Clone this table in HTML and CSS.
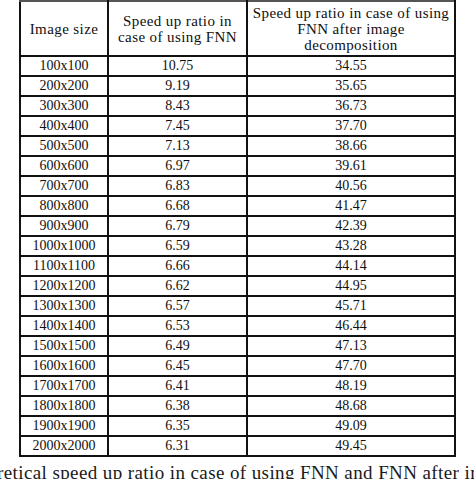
FILE: index.html
```html
<!DOCTYPE html>
<html>
<head>
<meta charset="utf-8">
<link rel="stylesheet" href="styles.css">
</head>
<body>
<table class="tbl">
  <colgroup><col class="c1"><col class="c2"><col class="c3"></colgroup>
  <thead>
    <tr class="head">
      <th>Image size</th>
      <th>Speed up ratio in<br>case of using FNN</th>
      <th>Speed up ratio in case of using<br>FNN after image<br>decomposition</th>
    </tr>
  </thead>
  <tbody>
    <tr><td>100x100</td><td>10.75</td><td>34.55</td></tr>
    <tr><td>200x200</td><td>9.19</td><td>35.65</td></tr>
    <tr><td>300x300</td><td>8.43</td><td>36.73</td></tr>
    <tr><td>400x400</td><td>7.45</td><td>37.70</td></tr>
    <tr><td>500x500</td><td>7.13</td><td>38.66</td></tr>
    <tr><td>600x600</td><td>6.97</td><td>39.61</td></tr>
    <tr><td>700x700</td><td>6.83</td><td>40.56</td></tr>
    <tr><td>800x800</td><td>6.68</td><td>41.47</td></tr>
    <tr><td>900x900</td><td>6.79</td><td>42.39</td></tr>
    <tr><td>1000x1000</td><td>6.59</td><td>43.28</td></tr>
    <tr><td>1100x1100</td><td>6.66</td><td>44.14</td></tr>
    <tr><td>1200x1200</td><td>6.62</td><td>44.95</td></tr>
    <tr><td>1300x1300</td><td>6.57</td><td>45.71</td></tr>
    <tr><td>1400x1400</td><td>6.53</td><td>46.44</td></tr>
    <tr><td>1500x1500</td><td>6.49</td><td>47.13</td></tr>
    <tr><td>1600x1600</td><td>6.45</td><td>47.70</td></tr>
    <tr><td>1700x1700</td><td>6.41</td><td>48.19</td></tr>
    <tr><td>1800x1800</td><td>6.38</td><td>48.68</td></tr>
    <tr><td>1900x1900</td><td>6.35</td><td>49.09</td></tr>
    <tr><td>2000x2000</td><td>6.31</td><td>49.45</td></tr>
  </tbody>
</table>
<div class="caption-clip">
  <p class="caption">retical speed up ratio in case of using FNN and FNN after image decomposition</p>
</div>
</body>
</html>
```
FILE: styles.css
```css
html, body {
  margin: 0;
  padding: 0;
  background: #ffffff;
  overflow: hidden;
}
body {
  width: 474px;
  height: 479px;
  font-family: "Liberation Serif", "Times New Roman", serif;
  color: #0f0f0f;
}
.tbl {
  margin-left: 19px;
  border-collapse: collapse;
  table-layout: fixed;
  width: 437px;
}
.c1 { width: 88px; }
.c2 { width: 139px; }
.c3 { width: 208px; }
.tbl th, .tbl td {
  border: 2px solid #121212;
  padding: 0;
  text-align: center;
  vertical-align: middle;
}
.tbl thead th {
  border-top-color: #555555;
}
.tbl th {
  font-weight: normal;
  font-size: 15px;
  letter-spacing: 0.4px;
  line-height: 16px;
}
.head {
  height: 55px;
}
.tbl td {
  font-size: 14px;
  line-height: 16px;
  height: 18px;
}
.caption-clip {
  width: 474px;
  overflow: hidden;
}
.caption {
  margin: 5px 0 0 -3px;
  white-space: nowrap;
  font-size: 19px;
  letter-spacing: 0.4px;
  line-height: 22px;
  color: #1a1a1a;
}
```
